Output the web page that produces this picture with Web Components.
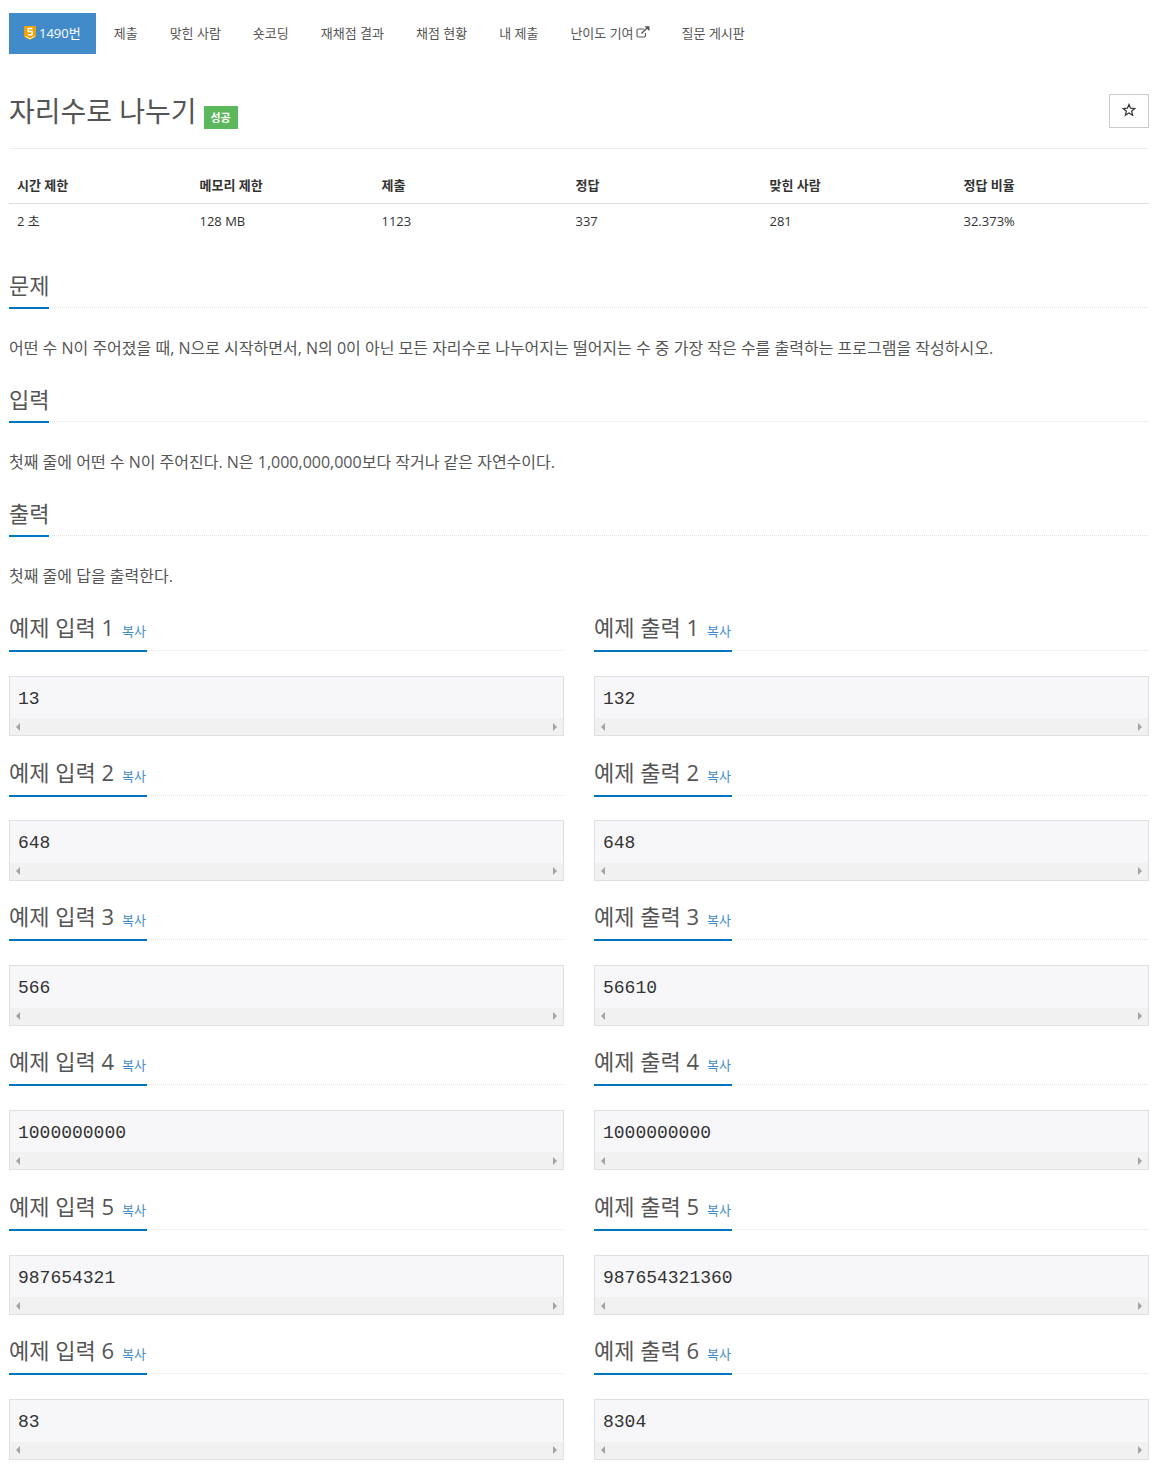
<!DOCTYPE html>
<html lang="ko">
<head>
<meta charset="utf-8">
<title>자리수로 나누기</title>
<style>
  html, body { margin: 0; background: #fff; }
  body {
    font-family: "Open Sans", "Noto Sans CJK KR", sans-serif;
    font-size: 14px;
    color: #333;
  }
  problem-page { width: 1140px; margin-left: 9px; }
</style>
</head>
<body>
<problem-page>
  <problem-nav></problem-nav>
  <problem-title></problem-title>
  <problem-info></problem-info>
  <problem-section heading="문제">어떤 수 N이 주어졌을 때, N으로 시작하면서, N의 0이 아닌 모든 자리수로 나누어지는 떨어지는 수 중 가장 작은 수를 출력하는 프로그램을 작성하시오.</problem-section>
  <problem-section heading="입력">첫째 줄에 어떤 수 N이 주어진다. N은 1,000,000,000보다 작거나 같은 자연수이다.</problem-section>
  <problem-section heading="출력">첫째 줄에 답을 출력한다.</problem-section>
  <sample-list></sample-list>
</problem-page>

<script>
class ProblemPage extends HTMLElement {
  constructor() {
    super();
    this.attachShadow({ mode: "open" });
    this.shadowRoot.innerHTML = `
      <style>:host { display: block; }</style>
      <slot></slot>
    `;
  }
}

class ProblemNav extends HTMLElement {
  constructor() {
    super();
    this.attachShadow({ mode: "open" });
    const links = ['제출', '맞힌 사람', '숏코딩', '재채점 결과', '채점 현황', '내 제출', '난이도 기여', '질문 게시판'];
    const items = links.map(text => {
      const icon = text === '난이도 기여' ? `
        <svg class="ext" viewBox="0 0 14 12" width="14" height="12">
          <path d="M9.5 7v2.5A1.5 1.5 0 0 1 8 11H2.5A1.5 1.5 0 0 1 1 9.5V4.5A1.5 1.5 0 0 1 2.5 3H8" fill="none" stroke="#555" stroke-width="1.1"/>
          <path d="M5.5 7.5 12 1" fill="none" stroke="#555" stroke-width="1.4"/>
          <path d="M8.5 .2h5v5z" fill="#555"/>
        </svg>` : '';
      return `<a>${text}${icon}</a>`;
    }).join('');
    this.shadowRoot.innerHTML = `
      <style>
        :host { display: flex; margin-top: 13px; height: 41px; font-size: 13px; color: #555; }
        a { display: flex; align-items: center; padding: 0 16px 2px; white-space: nowrap; }
        a.active { background: #428bca; color: #fff; padding: 0 15px 2px; margin-right: 1px; }
        a:nth-of-type(2) { margin-left: 1px; }
        .html5 { margin-right: 3px; }
        .ext { margin-left: 2px; margin-top: -1px; }
      </style>
      <a class="active">
        <svg class="html5" viewBox="0 0 12 14" width="12" height="14">
          <path d="M0 0h12v10.5L6 14 0 10.5z" fill="#f0a000"/>
          <path d="M1.5 10.6 6 12.7l4.5-2.1" fill="none" stroke="#fff" stroke-width=".9"/>
          <path d="M8.5 2.6H4.2v3h3.9v3.2H3.8" fill="none" stroke="#fff" stroke-width="1.5"/>
        </svg>1490번</a>
      ${items}
    `;
  }
}

class ProblemTitle extends HTMLElement {
  constructor() {
    super();
    this.attachShadow({ mode: "open" });
    this.shadowRoot.innerHTML = `
      <style>
        :host { display: flex; align-items: flex-start; justify-content: space-between; margin-top: 40px; height: 54px; border-bottom: 1px solid #eee; }
        h1 { margin: 0; font-size: 28px; font-weight: 400; line-height: 34px; color: #555; display: flex; }
        .label { margin: 12px 0 0 7px; width: 34px; height: 23px; background: #5cb85c; color: #fff; font-size: 11px; font-weight: 700; line-height: 24px; text-align: center; }
        button { width: 40px; height: 34px; padding: 0 1px 2px 0; background: #fff; border: 1px solid #ccc; border-radius: 0; display: flex; align-items: center; justify-content: center; }
      </style>
      <h1>자리수로 나누기<span class="label">성공</span></h1>
      <button aria-label="즐겨찾기">
        <svg viewBox="0 0 14 14" width="14" height="14"><path d="M7 1.4 8.6 5.2l4.1.3-3.1 2.7 1 4L7 10l-3.6 2.2 1-4-3.1-2.7 4.1-.3z" fill="none" stroke="#333" stroke-width="1.2"/></svg>
      </button>
    `;
  }
}

class ProblemInfo extends HTMLElement {
  constructor() {
    super();
    this.attachShadow({ mode: "open" });
    const heads = ['시간 제한', '메모리 제한', '제출', '정답', '맞힌 사람', '정답 비율'];
    const cells = ['2 초', '128 MB', '1123', '337', '281', '32.373%'];
    this.shadowRoot.innerHTML = `
      <style>
        :host { display: block; margin-top: 19px; margin-bottom: 32px; font-size: 13px; color: #333; }
        .row { display: grid; grid-template-columns: 182.5px 182px 194px 194px 194px 1fr; }
        .row span { padding: 0 8px; }
        .head { height: 35px; line-height: 35px; font-weight: 700; border-bottom: 1px solid #ddd; }
        .body { height: 35px; line-height: 35px; }
      </style>
      <div class="row head">${heads.map(t => `<span>${t}</span>`).join('')}</div>
      <div class="row body">${cells.map(t => `<span>${t}</span>`).join('')}</div>
    `;
  }
}

class HeadLine extends HTMLElement {
  constructor() {
    super();
    this.attachShadow({ mode: "open" });
    this.shadowRoot.innerHTML = `
      <style>
        :host { display: block; border-bottom: 1px dotted #e4e4e4; height: var(--head-height, 36px); }
        h2 { display: inline-block; margin: 0; height: var(--head-height, 36px); font-size: 22px; font-weight: 400; line-height: 29px; color: #555; border-bottom: 2px solid #0076c0; white-space: nowrap; }
      </style>
      <h2>${this.getAttribute('text')}<slot></slot></h2>
    `;
  }
}

class ProblemSection extends HTMLElement {
  constructor() {
    super();
    this.attachShadow({ mode: "open" });
    this.shadowRoot.innerHTML = `
      <style>
        :host { display: block; height: 114px; }
        p { margin: 0; padding-top: 29px; font-size: 16px; line-height: 22px; color: #555; white-space: nowrap; }
      </style>
      <head-line text="${this.getAttribute('heading')}"></head-line>
      <p><slot></slot></p>
    `;
  }
}

class SampleBox extends HTMLElement {
  constructor() {
    super();
    this.attachShadow({ mode: "open" });
    this.shadowRoot.innerHTML = `
      <style>
        :host { display: block; min-width: 0; --head-height: 37px; }
        a { font-size: 13px; color: #428bca; margin-left: 8px; margin-right: 1px; }
        pre {
          margin: 24.85px 0 0; height: 60.5px; box-sizing: border-box; border: 1px solid #e0e0e4; background: #f7f7f9;
          display: flex; flex-direction: column; font-family: "Liberation Mono", monospace; font-size: 18px; color: #333;
        }
        .code { flex: 1; padding: 9px 8px 0; line-height: 26px; }
        .bar { flex: none; height: 17px; background: #f1f1f1; display: flex; justify-content: space-between; align-items: center; padding: 0 6px; }
        i.l { border-style: solid; border-width: 4px 4px 4px 0; border-color: transparent #a3a3a3 transparent transparent; }
        i.r { border-style: solid; border-width: 4px 0 4px 4px; border-color: transparent transparent transparent #a3a3a3; }
      </style>
      <head-line text="${this.getAttribute('heading')}"><a>복사</a></head-line>
      <pre><div class="code">${this.getAttribute('value')}</div><div class="bar"><i class="l"></i><i class="r"></i></div></pre>
    `;
  }
}

class SampleList extends HTMLElement {
  constructor() {
    super();
    this.attachShadow({ mode: "open" });
    const samples = [
      ['13', '132'],
      ['648', '648'],
      ['566', '56610'],
      ['1000000000', '1000000000'],
      ['987654321', '987654321360'],
      ['83', '8304']
    ];
    const boxes = samples.map(([input, output], i) => `
      <sample-box heading="예제 입력 ${i + 1}" value="${input}"></sample-box>
      <sample-box heading="예제 출력 ${i + 1}" value="${output}"></sample-box>
    `).join('');
    this.shadowRoot.innerHTML = `
      <style>
        :host { display: grid; grid-template-columns: 555px 555px; column-gap: 30px; row-gap: 21.35px; margin-top: -.1px; }
      </style>
      ${boxes}
    `;
  }
}

customElements.define('head-line', HeadLine);
customElements.define('problem-page', ProblemPage);
customElements.define('problem-nav', ProblemNav);
customElements.define('problem-title', ProblemTitle);
customElements.define('problem-info', ProblemInfo);
customElements.define('problem-section', ProblemSection);
customElements.define('sample-box', SampleBox);
customElements.define('sample-list', SampleList);
</script>
</body>
</html>
